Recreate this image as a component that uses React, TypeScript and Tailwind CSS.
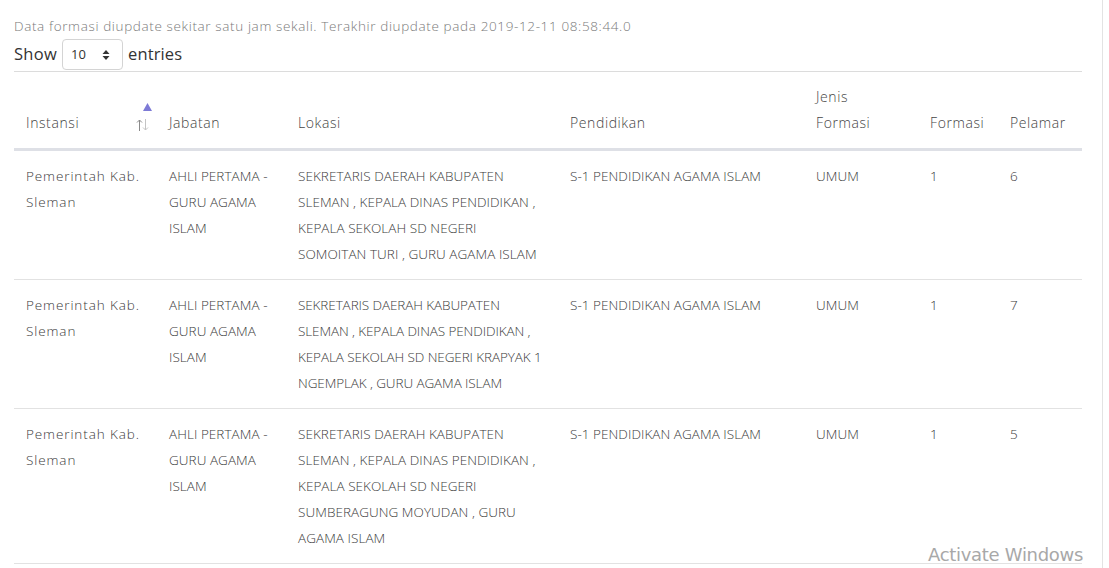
import React from "react";

const rows = [
  {
    instansi: "Pemerintah Kab. Sleman",
    jabatan: "AHLI PERTAMA - GURU AGAMA ISLAM",
    lokasi:
      "SEKRETARIS DAERAH KABUPATEN SLEMAN , KEPALA DINAS PENDIDIKAN , KEPALA SEKOLAH SD NEGERI SOMOITAN TURI , GURU AGAMA ISLAM",
    pendidikan: "S-1 PENDIDIKAN AGAMA ISLAM",
    jenis: "UMUM",
    formasi: "1",
    pelamar: "6",
    tight: false,
  },
  {
    instansi: "Pemerintah Kab. Sleman",
    jabatan: "AHLI PERTAMA - GURU AGAMA ISLAM",
    lokasi:
      "SEKRETARIS DAERAH KABUPATEN SLEMAN , KEPALA DINAS PENDIDIKAN , KEPALA SEKOLAH SD NEGERI KRAPYAK 1 NGEMPLAK , GURU AGAMA ISLAM",
    pendidikan: "S-1 PENDIDIKAN AGAMA ISLAM",
    jenis: "UMUM",
    formasi: "1",
    pelamar: "7",
    tight: true,
  },
  {
    instansi: "Pemerintah Kab. Sleman",
    jabatan: "AHLI PERTAMA - GURU AGAMA ISLAM",
    lokasi:
      "SEKRETARIS DAERAH KABUPATEN SLEMAN , KEPALA DINAS PENDIDIKAN , KEPALA SEKOLAH SD NEGERI SUMBERAGUNG MOYUDAN , GURU AGAMA ISLAM",
    pendidikan: "S-1 PENDIDIKAN AGAMA ISLAM",
    jenis: "UMUM",
    formasi: "1",
    pelamar: "5",
    tight: false,
  },
];

const td = "px-[12px] pt-[12px] pb-[12px] tracking-[0.05px]";
const th = "text-left font-light px-[12px] py-[12px] tracking-[0.6px]";

const App = () => {
  return (
    <div className="relative w-full min-h-screen bg-white overflow-hidden font-['Open_Sans',sans-serif]">
      <div className="w-[1103px] min-h-[568px] border-r border-[#e3e3e3] pl-[14px] pr-[21px] pt-[16px]">
        <p className="text-[13.5px] leading-[20px] text-[#7a7a7a] tracking-[0.63px] font-light">
          Data formasi diupdate sekitar satu jam sekali. Terakhir diupdate pada 2019-12-11 08:58:44.0
        </p>
        <div className="flex items-center gap-[5px] mt-[3px] h-[31px] text-[16.5px] text-[#333]">
          <span className="tracking-[0.3px]">Show</span>
          <div className="flex items-center justify-between w-[61px] h-[31px] border border-[#d4d4d4] rounded-[4px] pl-[8px] pr-[12px] text-[13px] text-[#333]">
            <span>10</span>
            <svg width="8" height="12" viewBox="0 0 8 12">
              <path d="M4 1 L7.5 5 L0.5 5 Z" fill="#333" />
              <path d="M4 11 L7.5 7 L0.5 7 Z" fill="#333" />
            </svg>
          </div>
          <span className="tracking-[0.1px]">entries</span>
        </div>
        <table className="table-fixed border-collapse w-[1068px] mt-[1px] border-t border-[#dcdcdc] text-[13.5px]">
          <colgroup>
            <col className="w-[143px]" />
            <col className="w-[129px]" />
            <col className="w-[272px]" />
            <col className="w-[246px]" />
            <col className="w-[114px]" />
            <col className="w-[80px]" />
            <col className="w-[84px]" />
          </colgroup>
          <thead>
            <tr className="border-b-[3px] border-[#dee0e6] text-[#444] text-[14px] leading-[26px] align-bottom">
              <th className={`relative ${th}`}>
                Instansi
                <svg
                  className="absolute right-[5px] top-[31px]"
                  width="9"
                  height="8"
                  viewBox="0 0 9 8"
                >
                  <path d="M4.5 0 L9 8 L0 8 Z" fill="#7d7ad6" />
                </svg>
                <svg
                  className="absolute right-[8px] bottom-[16px]"
                  width="13"
                  height="14"
                  viewBox="0 0 13 14"
                  fill="none"
                  stroke="#8a8a8a"
                  strokeWidth="1"
                >
                  <path d="M3.5 13 V2 M1 4.5 L3.5 2 L6 4.5" />
                  <path d="M9.5 1 V12 M7 9.5 L9.5 12 L12 9.5" stroke="#c4c4c4" />
                </svg>
              </th>
              <th className={th}>Jabatan</th>
              <th className={th}>Lokasi</th>
              <th className={th}>Pendidikan</th>
              <th className={th}>
                Jenis
                <br />
                Formasi
              </th>
              <th className={th}>Formasi</th>
              <th className={th}>Pelamar</th>
            </tr>
          </thead>
          <tbody className="text-[#3a3a3a] font-light leading-[26px] align-top">
            {rows.map((r, i) => (
              <tr key={i} className="border-b border-[#e2e2e2]">
                <td className="px-[12px] py-[12px] tracking-[0.9px]">{r.instansi}</td>
                <td className={td}>{r.jabatan}</td>
                <td
                  className={
                    r.tight
                      ? "px-[12px] py-[12px] tracking-[-0.1px]"
                      : td
                  }
                >
                  {r.lokasi}
                </td>
                <td className={td}>{r.pendidikan}</td>
                <td className={td}>{r.jenis}</td>
                <td className={td}>{r.formasi}</td>
                <td className={td}>{r.pelamar}</td>
              </tr>
            ))}
          </tbody>
        </table>
      </div>
      <div className="absolute left-[928px] top-[541px] text-[18px] text-[#a8a8a8] font-['DejaVu_Sans',sans-serif] tracking-[-0.3px]">
        Activate Windows
      </div>
    </div>
  );
};

export default App;
